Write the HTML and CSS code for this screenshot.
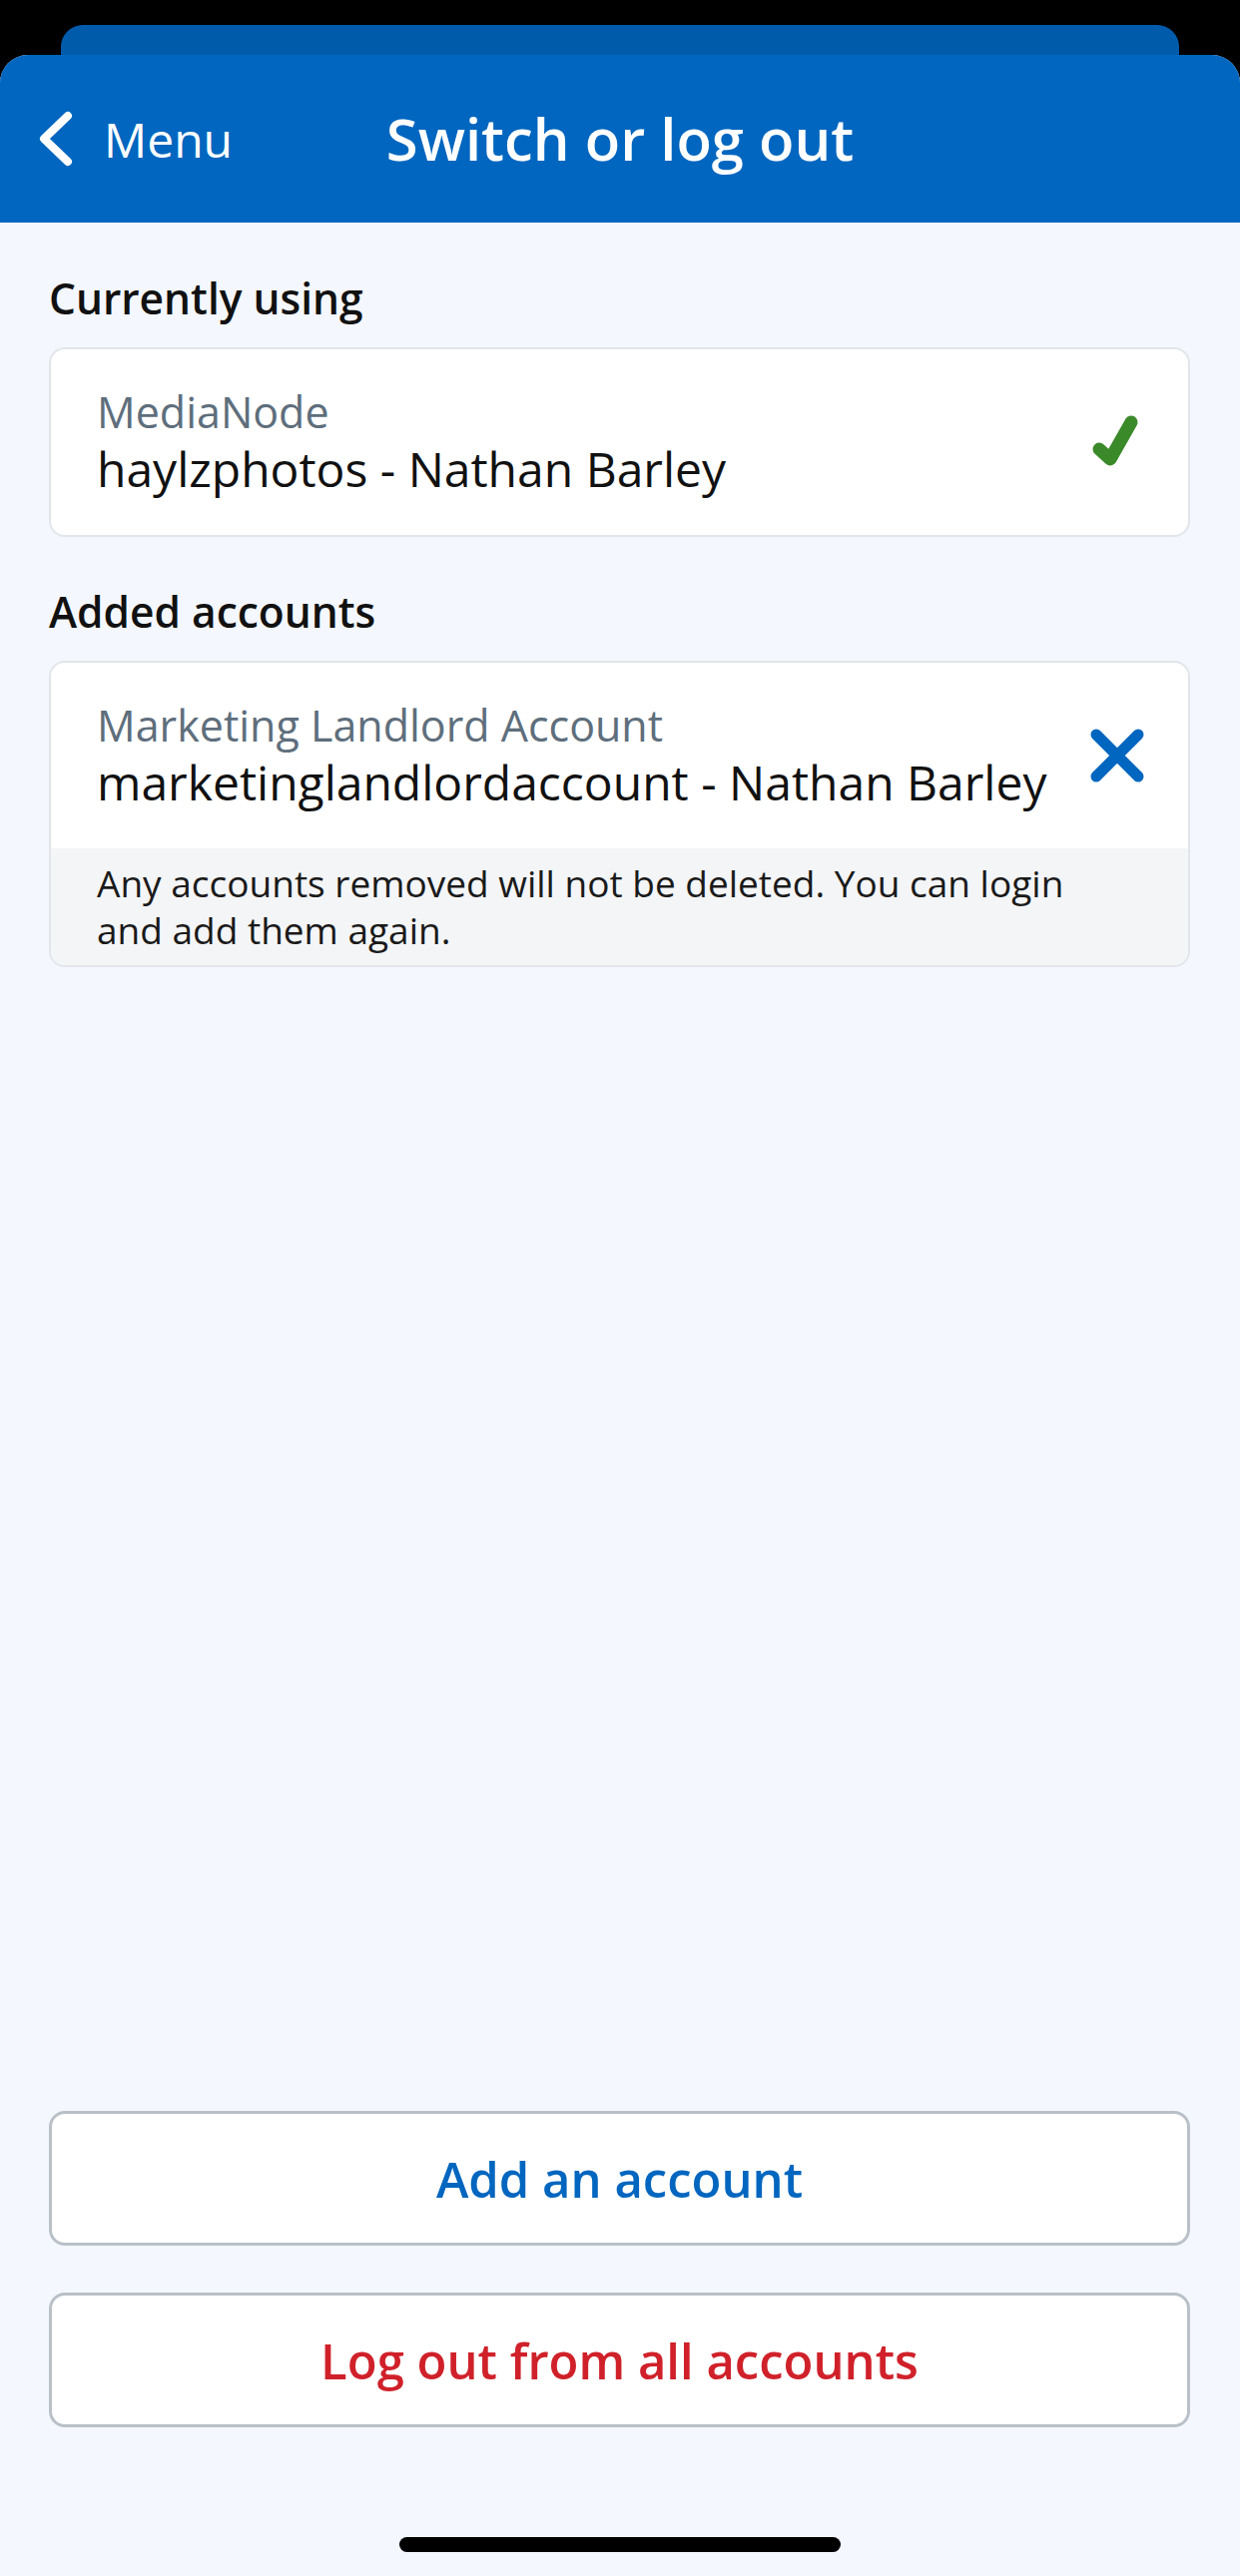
FILE: index.html
```html
<!DOCTYPE html>
<html lang="en">
<head>
    <meta charset="utf-8">
    <meta name="viewport" content="width=device-width, initial-scale=1">
    <title>Switch or log out</title>
    <link rel="stylesheet" href="styles.css">
</head>
<body>
    <div class="sheet-behind"></div>

    <div class="sheet">
        <header class="nav-bar">
            <a class="back" href="#">
                <svg class="back-icon" width="40" height="62" viewBox="0 0 40 62">
                    <path d="M32 8 L8 31 L32 54" fill="none" stroke="#fff" stroke-width="8" stroke-linecap="round" stroke-linejoin="round"/>
                </svg>
                <span>Menu</span>
            </a>
            <h1 class="title">Switch or log out</h1>
            <div></div>
        </header>

        <main class="content">
            <h2 class="section-label">Currently using</h2>
            <div class="account-card">
                <div class="account-row">
                    <div class="account-text">
                        <div class="account-org">MediaNode</div>
                        <div class="account-name">haylzphotos - Nathan Barley</div>
                    </div>
                    <svg class="row-icon" width="64" height="64" viewBox="0 0 64 64">
                        <path d="M15 39 L26 49 L47 12" fill="none" stroke="#3b8a2a" stroke-width="13" stroke-linecap="round" stroke-linejoin="round"/>
                    </svg>
                </div>
            </div>

            <h2 class="section-label">Added accounts</h2>
            <div class="account-card">
                <div class="account-row">
                    <div class="account-text">
                        <div class="account-org">Marketing Landlord Account</div>
                        <div class="account-name">marketinglandlordaccount - Nathan Barley</div>
                    </div>
                    <svg class="row-icon" width="64" height="64" viewBox="0 0 64 64">
                        <path d="M12 11 L54 53 M54 11 L12 53" fill="none" stroke="#0066bf" stroke-width="11" stroke-linecap="round"/>
                    </svg>
                </div>
                <p class="card-note">Any accounts removed will not be deleted. You can login and add them again.</p>
            </div>
        </main>

        <footer class="actions">
            <button class="action-btn add">Add an account</button>
            <button class="action-btn logout">Log out from all accounts</button>
            <div class="home-bar"></div>
        </footer>
    </div>
</body>
</html>
```

FILE: styles.css
```css
html, body {
    margin: 0;
    padding: 0;
}
body {
    background: #000;
    font-family: "Open Sans", Lato, sans-serif;
    height: 2581px;
    overflow: hidden;
    display: flex;
    flex-direction: column;
}

/* the card peeking out behind the modal */
.sheet-behind {
    margin: 25px 61px 0;
    height: 30px;
    background: #005bab;
    border-radius: 22px 22px 0 0;
}

.sheet {
    flex: 1;
    background: #f4f7fd;
    border-radius: 28px 28px 0 0;
    overflow: hidden;
    display: flex;
    flex-direction: column;
}

.nav-bar {
    height: 168px;
    background: #0066bf;
    color: #fff;
    display: grid;
    grid-template-columns: 1fr auto 1fr;
    align-items: center;
}
.back {
    display: flex;
    align-items: center;
    color: #fff;
    text-decoration: none;
    font-size: 48px;
    padding-left: 36px;
}
.back-icon {
    margin-right: 28px;
}
.title {
    margin: 0;
    font-size: 58px;
    font-weight: 600;
    line-height: 1;
}

.content {
    padding: 51px 50px 0 49px;
}
.section-label {
    margin: 0 0 24px;
    font-size: 42.5px;
    font-weight: 600;
    line-height: 50px;
    color: #111;
}
.account-card {
    background: #fff;
    border: 2px solid #e2e5ea;
    border-radius: 16px;
    overflow: hidden;
    margin-bottom: 50px;
}
.account-row {
    display: flex;
    align-items: center;
    justify-content: space-between;
    padding: 0 40px 0 46px;
    height: 186px;
}
.account-org {
    font-size: 43px;
    line-height: 50px;
    color: #5e6e7c;
}
.account-name {
    font-size: 48px;
    line-height: 56px;
    margin-top: 4px;
    color: #111;
    white-space: nowrap;
}
.card-note {
    margin: 0;
    background: #f4f5f7;
    padding: 11px 80px 12px 46px;
    font-size: 37px;
    line-height: 47px;
    color: #1a1a1a;
}

.actions {
    margin-top: auto;
    padding: 0 50px 24px 49px;
    display: flex;
    flex-direction: column;
}
.action-btn {
    height: 135px;
    background: #fff;
    border: 3px solid #b9c0c7;
    border-radius: 16px;
    font-family: inherit;
    font-size: 49px;
    font-weight: 600;
    cursor: pointer;
}
.action-btn + .action-btn {
    margin-top: 47px;
}
.add {
    color: #0066bf;
}
.logout {
    color: #d0212a;
}
.home-bar {
    align-self: center;
    width: 442px;
    height: 15px;
    border-radius: 8px;
    background: #000;
    margin-top: 110px;
}
```
